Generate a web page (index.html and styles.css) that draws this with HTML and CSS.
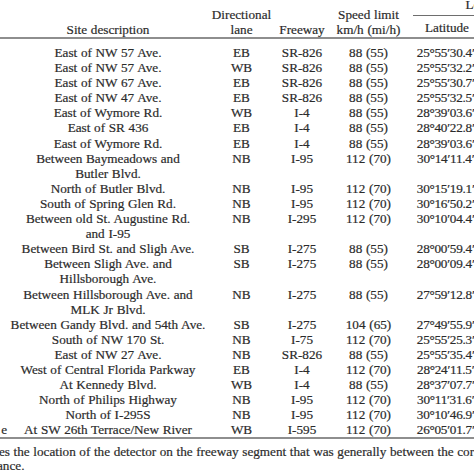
FILE: index.html
```html
<!DOCTYPE html>
<html lang="en">
<head>
<meta charset="utf-8">
<title>Detector sites</title>
<link rel="stylesheet" href="styles.css">
</head>
<body>
<div class="page">
  <div class="sheet">
    <div class="thead">
      <div class="h c-site">Site description</div>
      <div class="h c-dir">Directional<br>lane</div>
      <div class="h c-fwy">Freeway</div>
      <div class="h c-spd">Speed limit<br>km/h (mi/h)</div>
      <div class="h-group">Location</div>
      <div class="h c-lat">Latitude</div>
      <div class="h c-lon">Longitude</div>
    </div>
    <div class="tbody">
      <div class="row"><div class="c0"></div><div class="site">East of NW 57 Ave.</div><div>EB</div><div>SR-826</div><div>88 (55)</div><div class="lat">25°55′30.4″</div><div></div></div>
      <div class="row"><div class="c0"></div><div class="site">East of NW 57 Ave.</div><div>WB</div><div>SR-826</div><div>88 (55)</div><div class="lat">25°55′32.2″</div><div></div></div>
      <div class="row"><div class="c0"></div><div class="site">East of NW 67 Ave.</div><div>EB</div><div>SR-826</div><div>88 (55)</div><div class="lat">25°55′30.7″</div><div></div></div>
      <div class="row"><div class="c0"></div><div class="site">East of NW 47 Ave.</div><div>EB</div><div>SR-826</div><div>88 (55)</div><div class="lat">25°55′32.5″</div><div></div></div>
      <div class="row"><div class="c0"></div><div class="site">East of Wymore Rd.</div><div>WB</div><div>I-4</div><div>88 (55)</div><div class="lat">28°39′03.6″</div><div></div></div>
      <div class="row"><div class="c0"></div><div class="site">East of SR 436</div><div>EB</div><div>I-4</div><div>88 (55)</div><div class="lat">28°40′22.8″</div><div></div></div>
      <div class="row"><div class="c0"></div><div class="site">East of Wymore Rd.</div><div>EB</div><div>I-4</div><div>88 (55)</div><div class="lat">28°39′03.6″</div><div></div></div>
      <div class="row"><div class="c0"></div><div class="site">Between Baymeadows and<br>Butler Blvd.</div><div>NB</div><div>I-95</div><div>112 (70)</div><div class="lat">30°14′11.4″</div><div></div></div>
      <div class="row"><div class="c0"></div><div class="site">North of Butler Blvd.</div><div>NB</div><div>I-95</div><div>112 (70)</div><div class="lat">30°15′19.1″</div><div></div></div>
      <div class="row"><div class="c0"></div><div class="site">South of Spring Glen Rd.</div><div>NB</div><div>I-95</div><div>112 (70)</div><div class="lat">30°16′50.2″</div><div></div></div>
      <div class="row"><div class="c0"></div><div class="site">Between old St. Augustine Rd.<br>and I-95</div><div>NB</div><div>I-295</div><div>112 (70)</div><div class="lat">30°10′04.4″</div><div></div></div>
      <div class="row"><div class="c0"></div><div class="site">Between Bird St. and Sligh Ave.</div><div>SB</div><div>I-275</div><div>88 (55)</div><div class="lat">28°00′59.4″</div><div></div></div>
      <div class="row"><div class="c0"></div><div class="site">Between Sligh Ave. and<br>Hillsborough Ave.</div><div>SB</div><div>I-275</div><div>88 (55)</div><div class="lat">28°00′09.4″</div><div></div></div>
      <div class="row"><div class="c0"></div><div class="site">Between Hillsborough Ave. and<br>MLK Jr Blvd.</div><div>NB</div><div>I-275</div><div>88 (55)</div><div class="lat">27°59′12.8″</div><div></div></div>
      <div class="row"><div class="c0"></div><div class="site">Between Gandy Blvd. and 54th Ave.</div><div>SB</div><div>I-275</div><div>104 (65)</div><div class="lat">27°49′55.9″</div><div></div></div>
      <div class="row"><div class="c0"></div><div class="site">South of NW 170 St.</div><div>NB</div><div>I-75</div><div>112 (70)</div><div class="lat">25°55′25.3″</div><div></div></div>
      <div class="row"><div class="c0"></div><div class="site">East of NW 27 Ave.</div><div>NB</div><div>SR-826</div><div>88 (55)</div><div class="lat">25°55′35.4″</div><div></div></div>
      <div class="row"><div class="c0"></div><div class="site">West of Central Florida Parkway</div><div>EB</div><div>I-4</div><div>112 (70)</div><div class="lat">28°24′11.5″</div><div></div></div>
      <div class="row"><div class="c0"></div><div class="site">At Kennedy Blvd.</div><div>WB</div><div>I-4</div><div>88 (55)</div><div class="lat">28°37′07.7″</div><div></div></div>
      <div class="row"><div class="c0"></div><div class="site">North of Philips Highway</div><div>NB</div><div>I-95</div><div>112 (70)</div><div class="lat">30°11′31.6″</div><div></div></div>
      <div class="row"><div class="c0"></div><div class="site">North of I-295S</div><div>NB</div><div>I-95</div><div>112 (70)</div><div class="lat">30°10′46.9″</div><div></div></div>
      <div class="row"><div class="c0">e</div><div class="site">At SW 26th Terrace/New River</div><div>WB</div><div>I-595</div><div>112 (70)</div><div class="lat">26°05′01.7″</div><div></div></div>
    </div>
    <div class="note">
      <div class="note-line l1">es the location of the detector on the freeway segment that was generally between the corresponding</div>
      <div class="note-line l2">ance.</div>
    </div>
  </div>
</div>
</body>
</html>
```
FILE: styles.css
```css
html, body {
  margin: 0;
  padding: 0;
  background: #ffffff;
}

.page {
  width: 474px;
  height: 474px;
  overflow: hidden;
  font-family: "Liberation Serif", "Times New Roman", serif;
  font-size: 13.2px;
  color: #2b2b2b;
  word-spacing: 0.4px;
  -webkit-text-stroke: 0.2px #2b2b2b;
}

.sheet {
  width: 568px;
}

.thead,
.row {
  display: grid;
  grid-template-columns: 10px 196px 71px 50px 83px 74px 84px;
}

.thead {
  grid-template-rows: 16px 21px;
  height: 37px;
  border-bottom: 2px solid #8e8e8e;
  line-height: 14.5px;
  text-align: center;
  white-space: nowrap;
}

.h {
  grid-row: 1 / 3;
  align-self: end;
}

.c-site { grid-column: 2; }
.c-dir  { grid-column: 3; }
.c-fwy  { grid-column: 4; }
.c-spd  { grid-column: 5; }

.h-group {
  grid-column: 6 / 8;
  grid-row: 1;
  line-height: 10px;
  padding-bottom: 5px;
  margin: 0 3px;
  border-bottom: 1px solid #6e6e6e;
}

.c-lat,
.c-lon {
  grid-row: 2;
  padding-bottom: 1.5px;
}
.c-lat { grid-column: 6; }
.c-lon { grid-column: 7; }

.tbody {
  padding-top: 6px;
  border-bottom: 2px solid #8e8e8e;
}

.row {
  line-height: 15.1px;
  text-align: center;
  white-space: nowrap;
}

.row .c0 {
  text-align: right;
  padding-right: 3px;
}

.row .lat {
  letter-spacing: -0.25px;
}

.note {
  margin-top: 6px;
  line-height: 14px;
  white-space: nowrap;
  word-spacing: 0.3px;
}

.note-line.l1 {
  margin-left: -1px;
}

.note-line.l2 {
  margin-left: -3px;
}
```
